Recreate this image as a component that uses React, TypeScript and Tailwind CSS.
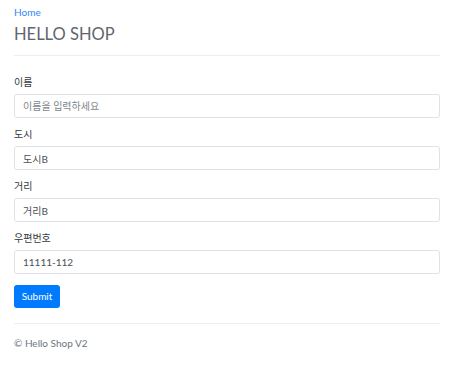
import React from "react";

const font = { fontFamily: 'Lato, "Noto Sans CJK KR", sans-serif' };

function Field({ label, value, placeholder }: { label: string; value?: string; placeholder?: string }) {
  return (
    <div className="mb-[8px]">
      <label className="block text-[10px] leading-[16px] text-[#343a40] mb-[4px]">{label}</label>
      <input
        className="block w-full h-[24px] px-[8px] text-[10px] text-[#495057] bg-white border border-[#dfe3e7] rounded-[3px] outline-none placeholder:text-[#80878d]"
        defaultValue={value}
        placeholder={placeholder}
        style={font}
      />
    </div>
  );
}

export default function App() {
  return (
    <div className="bg-white w-[474px] h-[373px]" style={font}>
      <div className="ml-[14px] w-[426px] pt-[4px]">
        <a className="block text-[10px] leading-[16px] text-[#2f86f6]">Home</a>
        <h1 className="text-[16.5px] leading-[24px] mt-[2px] text-[#5f666d] font-normal">HELLO SHOP</h1>
        <div className="mt-[9px] h-px bg-[#eceef0]" />
        <form className="pt-[18px]">
          <Field label="이름" placeholder="이름을 입력하세요" />
          <Field label="도시" value="도시B" />
          <Field label="거리" value="거리B" />
          <Field label="우편번호" value="11111-112" />
          <button
            type="button"
            className="mt-[2px] h-[23px] w-[46px] text-[10px] text-white bg-[#007bff] rounded-[3px]"
            style={font}
          >
            Submit
          </button>
        </form>
        <div className="mt-[15px] h-px bg-[#eceef0]" />
        <div className="mt-[11px] text-[10px] leading-[16px] text-[#6c757d]">© Hello Shop V2</div>
      </div>
    </div>
  );
}
